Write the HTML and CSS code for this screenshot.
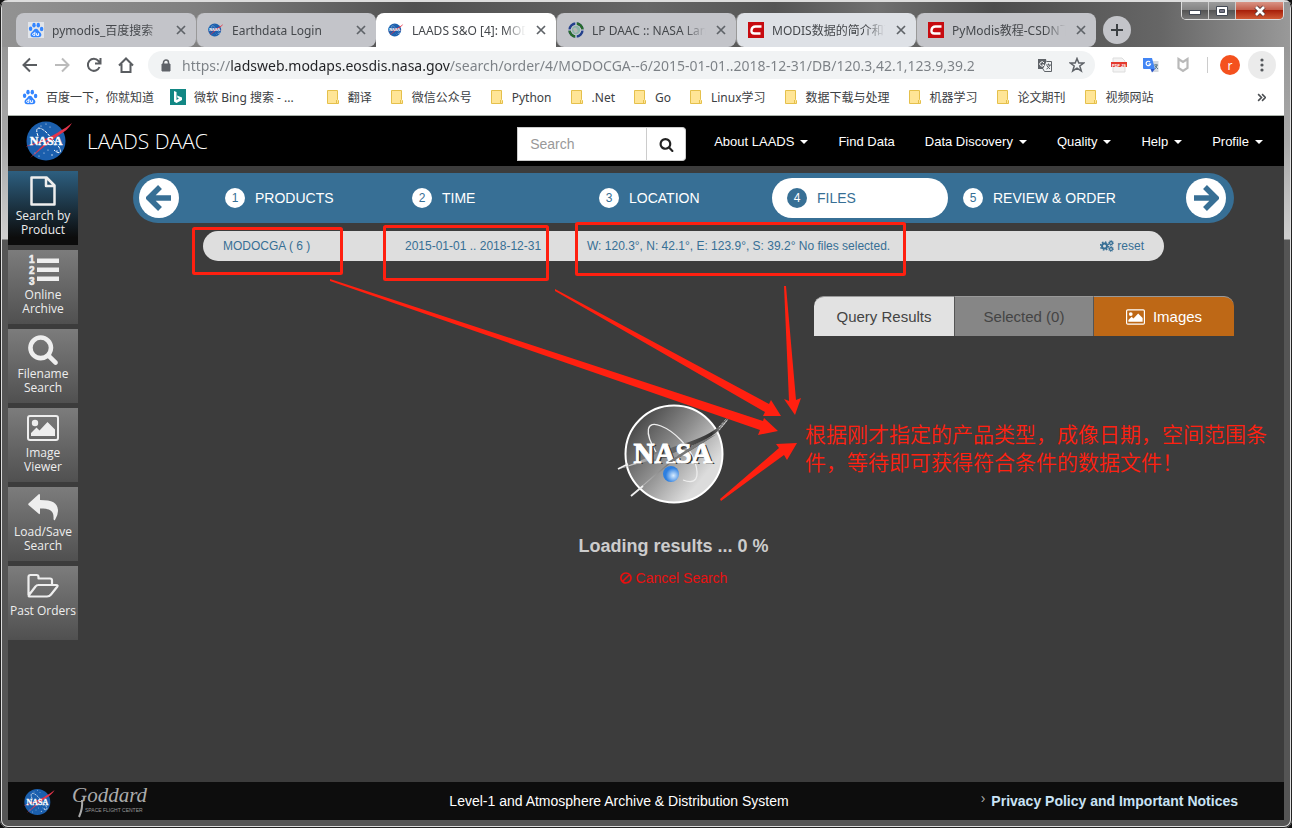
FILE: index.html
```html
<!DOCTYPE html>
<html lang="zh-CN">
<head>
  <meta charset="UTF-8" />
  <meta name="viewport" content="width=device-width, initial-scale=1.0"/>
  <title>LAADS DAAC - Files</title>
  <link rel="stylesheet" href="styles.css">
</head>
<body>
  <!-- shared icons -->
  <svg class="sprite" aria-hidden="true">
    <symbol id="nasa" viewBox="0 0 48 42">
      <circle cx="20" cy="21" r="19.5" fill="#1b5fad"/>
      <g fill="#dfe8f5">
        <circle cx="15" cy="6" r=".6"/><circle cx="20" cy="4" r=".6"/><circle cx="24" cy="7" r=".6"/><circle cx="9" cy="33" r=".6"/><circle cx="13" cy="36" r=".6"/><circle cx="18" cy="33" r=".6"/><circle cx="26" cy="35" r=".8"/><circle cx="31" cy="31" r=".7"/><circle cx="22" cy="30" r=".6"/>
      </g>
      <path d="M12 16C8 6 14 6 21 13L33 27C37 34 32 34 28 30" fill="none" stroke="#fff" stroke-width="1" stroke-dasharray="3 1"/>
      <path d="M46 3C40 14 28 17 14 23L-2 27C14 21 28 16 34 11C38 9 42 6 46 3Z" fill="#e4344a"/>
      <path d="M34 14L4 38C12 30 21 21 29 15Z" fill="#e4344a"/>
      <text x="20" y="25" text-anchor="middle" font-family="Liberation Serif, serif" font-size="12" font-weight="bold" fill="#fff" stroke="#fff" stroke-width=".4">NASA</text>
    </symbol>
    <symbol id="paw" viewBox="0 0 16 16">
      <g fill="#3385ff">
        <ellipse cx="2.6" cy="6.8" rx="1.7" ry="2.3"/><ellipse cx="6" cy="3.2" rx="1.7" ry="2.4"/><ellipse cx="10.3" cy="3.2" rx="1.7" ry="2.4"/><ellipse cx="13.6" cy="7" rx="1.7" ry="2.2"/>
        <path d="M8 6.8C10 6.8 10.5 9 12 10.3C14.5 12.5 13.3 15.2 10.8 15.2H5C2.5 15.2 1.6 12.3 3.8 10.3C5.5 9 6 6.8 8 6.8Z"/>
      </g>
      <path d="M6.9 9.8V13.4H5.7C4.2 13.4 4.2 11.3 5.7 11.3H6.9M8.6 11.2V13.4H10.6V11.2" fill="none" stroke="#fff"/>
    </symbol>
    <symbol id="close" viewBox="0 0 10 10">
      <path d="M1 1L9 9M9 1L1 9" fill="none" stroke="#5f6368" stroke-width="1.7"/>
    </symbol>
    <symbol id="csdn" viewBox="0 0 16 16">
      <path d="M0 0H16V16H0Z" fill="#c70b10"/>
      <path d="M13.5 4.5H7.5Q4 4.5 3.5 8Q3 11.5 6.5 11.5H12.5" fill="none" stroke="#fff" stroke-width="2.4"/>
    </symbol>
    <symbol id="folder" viewBox="0 0 12 14">
      <path d="M.5 .5H10.5V9.5Q12 9.5 11.5 13.5H.5Z" fill="#ffe596" stroke="#e5c04b"/>
      <path d="M9.5 13V10" stroke="#e5c04b"/>
    </symbol>
    <symbol id="search" viewBox="0 0 1792 1792">
      <path fill="currentColor" d="M1216 832q0-185-131.500-316.500T768 384 451.500 515.500 320 832t131.500 316.500T768 1280t316.500-131.500T1216 832zm512 832q0 52-38 90t-90 38q-54 0-90-38l-343-342q-179 124-399 124-143 0-273.500-55.500t-225-150-150-225T64 832t55.500-273.500 150-225 225-150T768 128t273.500 55.500 225 150 150 225T1472 832q0 220-124 399l343 343q37 37 37 90z"/>
    </symbol>
    <symbol id="picture" viewBox="0 0 32 26">
      <rect x="1" y="1" width="30" height="24" rx="2" fill="none" stroke="currentColor" stroke-width="2"/>
      <circle cx="8" cy="8" r="3.2" fill="currentColor"/>
      <path d="M4 21V18L9.500 12.500L12.500 15.500L20.500 7L28 14.500V21Z" fill="currentColor"/>
    </symbol>
    <symbol id="arrow" viewBox="0 0 26 26">
      <path d="M1 13H22M12 2L23 13L12 24" fill="none" stroke="currentColor" stroke-width="5.500"/>
    </symbol>
  </svg>

  <div class="window">
    <header class="tabstrip">
      <div class="tabs">
        <a class="tab" href="#"><svg class="favicon pale"><use href="#paw"/></svg><span class="tab-title">pymodis_百度搜索</span><svg class="close"><use href="#close"/></svg></a>
        <a class="tab" href="#"><svg class="favicon"><use href="#nasa"/></svg><span class="tab-title">Earthdata Login</span><svg class="close"><use href="#close"/></svg></a>
        <a class="tab active" href="#"><svg class="favicon"><use href="#nasa"/></svg><span class="tab-title">LAADS S&amp;O [4]: MODOCGA</span><svg class="close"><use href="#close"/></svg></a>
        <a class="tab" href="#">
          <svg class="favicon" viewBox="0 0 16 16"><circle cx="8" cy="8" r="6.500" fill="none" stroke="#23408c" stroke-width="2.400"/><path d="M8 1.500A6.500 6.500 0 0 1 14.500 8M8 14.500A6.500 6.500 0 0 1 1.500 8" fill="none" stroke="#276b2b" stroke-width="2.400"/><path d="M8 0V3M8 13V16M0 8H3M13 8H16" stroke="#dde" stroke-width="1.200"/><circle cx="8" cy="8" r="4.200" fill="#8db5a9"/><path d="M5 7Q7 4 9 7T7 11" fill="#b8b8b8"/></svg>
          <span class="tab-title">LP DAAC :: NASA Land Data</span><svg class="close"><use href="#close"/></svg>
        </a>
        <a class="tab light" href="#"><svg class="favicon"><use href="#csdn"/></svg><span class="tab-title">MODIS数据的简介和下载</span><svg class="close"><use href="#close"/></svg></a>
        <a class="tab" href="#"><svg class="favicon"><use href="#csdn"/></svg><span class="tab-title">PyModis教程-CSDN下载</span><svg class="close"><use href="#close"/></svg></a>
      </div>
      <button class="new-tab" aria-label="New tab"><svg viewBox="0 0 14 14"><path d="M7 1V13M1 7H13" stroke="#3c4043" stroke-width="2"/></svg></button>
      <div class="window-buttons">
        <button aria-label="Minimize"><svg viewBox="0 0 14 12"><rect x="1.500" y="5.500" width="11" height="4" fill="#fff" stroke="#444a55"/></svg></button>
        <button aria-label="Maximize"><svg viewBox="0 0 14 12"><path d="M1.500 1.500H12.500V10.500H1.500Z" fill="#fff" stroke="#444a55"/><path d="M4.500 4.500H9.500V7.500H4.500Z" fill="#778" stroke="#444a55"/></svg></button>
        <button class="win-close" aria-label="Close"><svg viewBox="0 0 14 12"><path d="M3 2L11 10M11 2L3 10" stroke="#533" stroke-width="4.500"/><path d="M3 2L11 10M11 2L3 10" stroke="#fff" stroke-width="2.700"/></svg></button>
      </div>
    </header>

    <div class="toolbar">
      <button class="tool" aria-label="Back"><svg viewBox="0 0 16 16"><path d="M15 8H2M8 1.500L1.500 8L8 14.500"/></svg></button>
      <button class="tool off" aria-label="Forward"><svg viewBox="0 0 16 16"><path d="M1 8H14M8 1.500L14.500 8L8 14.500"/></svg></button>
      <button class="tool" aria-label="Reload"><svg viewBox="0 0 16 16"><path d="M13.500 10A6 6 0 1 1 12.500 4L14 6M14.500 1V6.500H9"/></svg></button>
      <button class="tool" aria-label="Home"><svg viewBox="0 0 16 16"><path d="M3.500 7V15H12.500V7M1 8.500L8 1.500L15 8.500"/></svg></button>
      <div class="omnibox">
        <svg class="lock" viewBox="0 0 10 13"><path d="M1 5H9V12H1Z" fill="#5f6368" stroke="#5f6368"/><path d="M2.500 5V3.500A2.500 2.500 0 0 1 7.500 3.500V5" fill="none" stroke="#5f6368" stroke-width="1.500"/></svg>
        <input class="url" type="text" aria-label="Address" value="https://ladsweb.modaps.eosdis.nasa.gov/search/order/4/MODOCGA--6/2015-01-01..2018-12-31/DB/120.3,42.1,123.9,39.2">
        <svg class="box-icon" viewBox="0 0 16 16"><path d="M1 2H9L11 12H1Z" fill="#5f6368"/><path d="M9.500 4.500H14.500V14.500H7.500L6 12" fill="#f1f3f4" stroke="#5f6368"/><path d="M7 6A2.200 2.200 0 1 0 7 8H5" fill="none" stroke="#fff"/><path d="M9 8H14M11.500 6.500V8M13 8Q12 11 9.500 12M10 9L13 12" fill="none" stroke="#5f6368"/></svg>
        <svg class="box-icon" viewBox="0 0 16 16"><path d="M8 1.500L9.800 6H14.700L10.800 9L12.300 14L8 11.200L3.700 14L5.200 9L1.300 6H6.200Z" fill="none" stroke="#5f6368" stroke-width="1.500"/></svg>
      </div>
      <div class="extensions">
        <svg viewBox="0 0 16 16"><path d="M2 1H11L14 4V15H2Z" fill="#f3f3f3" stroke="#ddd"/><path d="M0 5H16V10H0Z" fill="#e33a2e"/><text x="8" y="9.500" text-anchor="middle" font-family="Liberation Sans, sans-serif" font-size="4" font-weight="bold" fill="#fff">PDF JS</text></svg>
        <svg viewBox="0 0 16 16"><path d="M6 4H15.500V15H9Z" fill="#d5d9df"/><path d="M0 1H9L12 12H1Q0 12 0 11Z" fill="#4285f4"/><path d="M7.500 12H12L9 15.500Z" fill="#2a56c6"/><path d="M7 5A2.200 2.200 0 1 0 7.500 7H5.500" fill="none" stroke="#fff" stroke-width="1.200"/><path d="M11 8H15M13 7V8M14 8Q13 11 12 12M12 9L15 12" fill="none" stroke="#607d8b"/></svg>
        <svg viewBox="0 0 16 16"><path d="M3.500 2V11L8 14L12.500 11V2L8 5Z" fill="none" stroke="#b9b9b9" stroke-width="2.200"/></svg>
        <span class="divider"></span>
        <button class="avatar">r</button>
        <button class="menu" aria-label="Menu"><svg viewBox="0 0 4 16"><circle cx="2" cy="3" r="1.600"/><circle cx="2" cy="8" r="1.600"/><circle cx="2" cy="13" r="1.600"/></svg></button>
      </div>
    </div>

    <nav class="bookmarks">
      <a href="#"><svg class="site"><use href="#paw"/></svg>百度一下，你就知道</a>
      <a class="bing" href="#"><svg class="site" viewBox="0 0 16 16"><path d="M0 0H16V16H0Z" fill="#128784"/><path d="M4 2L6.500 3V11L9 9.500L7.500 8.800L7 6.500L12 8.500V11L6.500 14L4 12.500Z" fill="#fff"/></svg>微软 Bing 搜索 - ...</a>
      <a href="#"><svg class="folder"><use href="#folder"/></svg>翻译</a>
      <a href="#"><svg class="folder"><use href="#folder"/></svg>微信公众号</a>
      <a href="#"><svg class="folder"><use href="#folder"/></svg>Python</a>
      <a href="#"><svg class="folder"><use href="#folder"/></svg>.Net</a>
      <a href="#"><svg class="folder"><use href="#folder"/></svg>Go</a>
      <a href="#"><svg class="folder"><use href="#folder"/></svg>Linux学习</a>
      <a href="#"><svg class="folder"><use href="#folder"/></svg>数据下载与处理</a>
      <a href="#"><svg class="folder"><use href="#folder"/></svg>机器学习</a>
      <a href="#"><svg class="folder"><use href="#folder"/></svg>论文期刊</a>
      <a href="#"><svg class="folder"><use href="#folder"/></svg>视频网站</a>
      <button class="more" aria-label="More bookmarks"><svg viewBox="0 0 8 8"><path d="M1 1L4 4L1 7M4.500 1L7.500 4L4.500 7" fill="none" stroke="#4a4d51" stroke-width="1.400"/></svg></button>
    </nav>

    <div class="page">
      <header class="site-header">
        <a class="brand" href="#"><svg><use href="#nasa"/></svg>LAADS DAAC</a>
        <form class="search">
          <input type="text" placeholder="Search" aria-label="Search">
          <button type="button" aria-label="Go"><svg><use href="#search"/></svg></button>
        </form>
        <nav class="main-nav">
          <a class="drop" href="#">About LAADS</a>
          <a href="#">Find Data</a>
          <a class="drop" href="#">Data Discovery</a>
          <a class="drop" href="#">Quality</a>
          <a class="drop" href="#">Help</a>
          <a class="drop" href="#">Profile</a>
        </nav>
      </header>

      <div class="content">
        <nav class="sidebar">
          <a class="current" href="#"><svg viewBox="0 0 32 32"><path d="M4.500 2.500H19.500L27.500 10.500V29.500H4.500ZM19 3V11H27" fill="none" stroke="currentColor" stroke-width="2.500" stroke-linejoin="round"/></svg>Search by Product</a>
          <a href="#"><svg viewBox="0 0 32 32"><path d="M10 4.500H32V9H10ZM10 13.500H32V18H10ZM10 22.500H32V27H10Z" fill="currentColor"/><g fill="currentColor" stroke="currentColor" stroke-width=".6" font-family="Liberation Sans, sans-serif" font-size="10" font-weight="bold"><text x="2" y="9">1</text><text x="2" y="20">2</text><text x="2" y="31">3</text></g></svg>Online Archive</a>
          <a href="#"><svg><use href="#search"/></svg>Filename Search</a>
          <a href="#"><svg><use href="#picture"/></svg>Image Viewer</a>
          <a href="#"><svg viewBox="0 0 32 32"><path d="M12 3Q13 3 13 4V9C26 9 31 12 31 20Q31 24 28 29Q27 30 26.500 28C27 20 24 17.500 13 17.500V22Q13 23.500 12 23L1.500 14Q1 13 1.500 12.500Z" fill="currentColor"/></svg>Load/Save Search</a>
          <a href="#"><svg viewBox="0 0 32 32"><path d="M1.500 25V7Q1.500 5 3.500 5H9.500Q11.500 5 11.500 7V8.500H23Q25 8.500 25 10.500V15M3 26.500Q1 26.500 2 25L8.500 16.500Q9.500 15 11.500 15H29Q31.500 15 30 17L24 24.500Q22.500 26.500 20 26.500Z" fill="none" stroke="currentColor" stroke-width="2.200" stroke-linejoin="round"/></svg>Past Orders</a>
        </nav>

        <main>
          <div class="wizard">
            <button class="step-arrow back" aria-label="Previous"><svg><use href="#arrow"/></svg></button>
            <div class="steps">
              <a class="step" href="#"><span class="num">1</span>PRODUCTS</a>
              <a class="step" href="#"><span class="num">2</span>TIME</a>
              <a class="step" href="#"><span class="num">3</span>LOCATION</a>
              <a class="step current" href="#"><span class="num">4</span>FILES</a>
              <a class="step" href="#"><span class="num">5</span>REVIEW &amp; ORDER</a>
            </div>
            <button class="step-arrow" aria-label="Next"><svg><use href="#arrow"/></svg></button>
          </div>

          <div class="summary">
            <span>MODOCGA ( 6 )</span>
            <span>2015-01-01 .. 2018-12-31</span>
            <span>W: 120.3°, N: 42.1°, E: 123.9°, S: 39.2° No files selected.</span>
            <a href="#"><svg viewBox="0 0 14 12"><g fill="none" stroke="currentColor"><circle cx="4.500" cy="6" r="2.500" stroke-width="2"/><circle cx="4.500" cy="6" r="4" stroke-width="1.500" stroke-dasharray="1.600 1.540"/><circle cx="11" cy="3" r="1.500" stroke-width="1.300"/><circle cx="11" cy="9" r="1.500" stroke-width="1.300"/><circle cx="11" cy="3" r="2.500" stroke-width=".8" stroke-dasharray="1 .96"/><circle cx="11" cy="9" r="2.500" stroke-width=".8" stroke-dasharray="1 .96"/></g></svg>reset</a>
          </div>

          <div class="result-tabs">
            <button class="results">Query Results</button>
            <button class="selected">Selected (0)</button>
            <button class="images"><svg><use href="#picture"/></svg>Images</button>
          </div>

          <div class="loading">
            <svg class="loader" viewBox="0 0 116 104">
              <defs>
                <linearGradient id="ball" x1="0" y1="0" x2="1" y2=".8"><stop offset=".1" stop-color="#3f3f3f"/><stop offset=".5" stop-color="#8c8c8c"/><stop offset=".85" stop-color="#dcdcdc"/></linearGradient>
                <linearGradient id="swoosh"><stop offset="0" stop-color="#ddd"/><stop offset=".5" stop-color="#666"/><stop offset=".85" stop-color="#333"/><stop offset="1" stop-color="#bbb"/></linearGradient>
                <radialGradient id="moon" cx=".65" cy=".6" r=".6"><stop offset="0" stop-color="#d8ecff"/><stop offset=".8" stop-color="#2d7fe0"/></radialGradient>
              </defs>
              <circle cx="58" cy="52" r="48.500" fill="url(#ball)" stroke="#fff" stroke-width="2"/>
              <path d="M40 50C28 30 30 18 45 24C58 29 74 45 79 60C84 76 80 83 67 78" fill="none" stroke="#eee" stroke-width="1.300"/>
              <path d="M112 17C102 36 77 43 50 54L3 67C30 57 51 46 73 40C90 34 99 29 112 17Z" fill="url(#swoosh)"/>
              <path d="M101 32L56 60L15 94C35 75 56 57 78 43Z" fill="url(#swoosh)"/>
              <path d="M2 67L12 62M15 94L27 84" fill="none" stroke="#eee" stroke-width="1.800"/>
              <path d="M103 25L112 15M101 31L113 16" fill="none" stroke="#eee" stroke-dasharray="1 1"/>
              <text x="59" y="62" text-anchor="middle" font-family="Liberation Serif, serif" font-size="29" font-weight="bold" fill="#333">NASA</text>
              <text x="57" y="61" text-anchor="middle" font-family="Liberation Serif, serif" font-size="29" font-weight="bold" fill="#fff" stroke="#fff">NASA</text>
              <path d="M101 32L56 60L52 60L78 43Z" fill="#777"/>
              <circle cx="55" cy="72" r="8" fill="url(#moon)"/>
            </svg>
            <h1>Loading results ... 0 %</h1>
            <a class="cancel" href="#"><svg viewBox="0 0 12 12"><path d="M6 1A5 5 0 1 1 5.900 1M2.500 9.500L9.500 2.500" fill="none" stroke="currentColor" stroke-width="1.700"/></svg>Cancel Search</a>
          </div>
        </main>
      </div>

      <footer class="site-footer">
        <div class="logos">
          <svg class="footer-nasa"><use href="#nasa"/></svg>
          <svg class="goddard" viewBox="0 0 80 34"><text x="2" y="18" font-family="Liberation Serif, serif" font-size="21" font-style="italic" fill="#aaa">Goddard</text><text x="15" y="28" font-family="Liberation Sans, sans-serif" font-size="5" fill="#999">SPACE FLIGHT CENTER</text><path d="M12 16Q13 24 9 33" fill="none" stroke="#aaa" stroke-width="2"/></svg>
        </div>
        <span>Level-1 and Atmosphere Archive &amp; Distribution System</span>
        <a class="privacy" href="#">Privacy Policy and Important Notices</a>
      </footer>
    </div>

    <!-- red notes drawn over the page -->
    <svg class="notes" viewBox="0 0 1292 828" aria-hidden="true">
      <g fill="none" stroke="#ff2010" stroke-width="3">
        <rect x="193.500" y="228.500" width="148" height="45" rx="1"/>
        <rect x="384.500" y="226.500" width="163" height="53" rx="1"/>
        <rect x="576.500" y="223.500" width="328" height="51" rx="1"/>
      </g>
      <g fill="#ff2010">
        <path d="M330 279L763 421L764 418L778 431L758 435L760 430L330 281Z"/>
        <path d="M555 289L769 404L771 400L781 416L763 416L765 412L555 291Z"/>
        <path d="M784 286H786L796 400L801 398L795 415L784 399L789 401Z"/>
        <path d="M720 499L779 448L776 444L797 443L787 460L784 455L721 501Z"/>
      </g>
    </svg>
    <p class="note-text">根据刚才指定的产品类型，成像日期，空间范围条件，等待即可获得符合条件的数据文件！</p>
  </div>
</body>
</html>
```
FILE: styles.css
```css
* {
  box-sizing: border-box;
}
body {
  margin: 0;
  background: #111;
  font-family: "Liberation Sans", "Noto Sans CJK SC", sans-serif;
  font-size: 14px;
}
a {
  color: inherit;
  text-decoration: none;
}
button {
  padding: 0;
  border: none;
  background: none;
  font: inherit;
  color: inherit;
  cursor: pointer;
}
svg {
  display: block;
  flex: none;
}
.sprite {
  position: absolute;
  width: 0;
  height: 0;
}

/* browser window */
.window {
  position: relative;
  display: flex;
  flex-direction: column;
  min-height: 100vh;
  padding: 0 8px 8px;
  border-radius: 8px;
  background: linear-gradient(#8f8f8f, #a8a8a8 140px, #cfcfcf 239px, #555 240px);
  box-shadow: inset 0 0 0 1px #222, inset 0 0 0 2px #ddd;
  font-family: "Noto Sans", "Noto Sans CJK SC", sans-serif;
  overflow: hidden;
}
.tabstrip {
  display: flex;
  height: 47px;
  margin: 0 -6px;
  padding: 0 6px 0 14px;
  border-top: 2px solid #ddd;
  background: linear-gradient(90deg, #929292, #808080 15%, #505050 32%, #666 50%, #555 60%, #707070 68%, #4c4c4c 77%, #666 90%, #999);
}
.tabs {
  display: flex;
  align-items: flex-end;
}
.tab {
  display: flex;
  align-items: center;
  width: 180px;
  height: 34px;
  padding: 0 10px 0 12px;
  border-radius: 8px;
  background: #c3c4c9;
  color: #45484c;
  font-size: 12px;
}
.tab.active {
  border-radius: 8px 8px 0 0;
  background: #fff;
}
.tab.light {
  background: #dee1e6;
}
.tab + .tab:not(.active) {
  padding-left: 11px;
  border-left: 1px solid #999;
}
.favicon {
  width: 16px;
  height: 16px;
  margin-right: 8px;
}
.favicon.pale {
  background: #e2e5ea;
}
.tab-title {
  flex: 1;
  overflow: hidden;
  white-space: nowrap;
  mask-image: linear-gradient(90deg, #000 80%, transparent 98%);
}
.close {
  width: 10px;
  height: 10px;
  margin-left: 8px;
}
.new-tab {
  display: grid;
  place-items: center;
  width: 28px;
  height: 28px;
  margin: 14px 0 0 7px;
  border-radius: 50%;
  background: #c3c4c9;
}
.new-tab svg {
  width: 14px;
  height: 14px;
}
.window-buttons {
  display: flex;
  height: 18px;
  margin-left: auto;
  border: 1px solid #ddd;
  border-top: none;
  border-radius: 0 0 5px 5px;
  overflow: hidden;
}
.window-buttons button {
  display: grid;
  place-items: center;
  width: 27px;
  border-right: 1px solid #ccc;
  background: linear-gradient(#9b9b9b, #858585 45%, #555 50%, #777);
}
.window-buttons .win-close {
  width: 47px;
  border: none;
  background: linear-gradient(#d99485, #c35e4b 45%, #a8200a 50%, #cf5a35);
}
.window-buttons svg {
  width: 14px;
  height: 12px;
}

/* address bar */
.toolbar {
  display: flex;
  align-items: center;
  height: 36px;
  padding: 0 8px 0 14px;
  background: #fff;
}
.tool {
  width: 16px;
  height: 16px;
  margin-right: 16px;
}
.tool svg {
  fill: none;
  stroke: #5a5d61;
  stroke-width: 2;
}
.tool.off svg {
  stroke: #bbb;
}
.omnibox {
  flex: 1;
  display: flex;
  align-items: center;
  height: 28px;
  margin-left: -2px;
  padding: 0 10px 0 13px;
  border-radius: 14px;
  background: #f1f3f4;
}
.lock {
  width: 10px;
  height: 13px;
}
.url {
  flex: 1;
  min-width: 0;
  margin-left: 11px;
  padding: 0;
  border: none;
  font-family: "Noto Sans", sans-serif;
  font-size: 14px;
  color: transparent;
  /* host name is darker than the rest of the address */
  background: linear-gradient(90deg, #7b8085 49px, #202124 49px, #202124 268px, #7b8085 268px);
  background-clip: text;
}
.box-icon {
  width: 16px;
  height: 16px;
  margin-left: 16px;
}
.extensions {
  display: flex;
  align-items: center;
  margin-left: 16px;
}
.extensions > svg {
  width: 16px;
  height: 16px;
  margin-right: 16px;
}
.divider {
  width: 1px;
  height: 16px;
  background: #ccc;
}
.avatar {
  width: 20px;
  height: 20px;
  margin: 0 8px 0 12px;
  border-radius: 50%;
  background: #f4511e;
  color: #fff;
  font-size: 12px;
}
.menu {
  display: grid;
  place-items: center;
  width: 28px;
  height: 28px;
  border-radius: 50%;
  background: #ebebeb;
}
.menu svg {
  width: 4px;
  height: 16px;
  fill: #55585c;
}
.bookmarks {
  display: flex;
  align-items: center;
  gap: 19px;
  height: 33px;
  padding: 0 18px 4px 14px;
  border-bottom: 1px solid #aab2aa;
  background: #fff;
  color: #3c4043;
  font-size: 12px;
  white-space: nowrap;
}
.bookmarks a {
  display: flex;
  align-items: center;
}
.bing {
  margin: 0 14px 0 -3px;
}
.site {
  width: 16px;
  height: 16px;
  margin-right: 8px;
}
.folder {
  width: 12px;
  height: 14px;
  margin-right: 9px;
}
.more {
  margin-left: auto;
}
.more svg {
  width: 9px;
  height: 9px;
}

/* page */
.page {
  flex: 1;
  display: flex;
  flex-direction: column;
  background: #3c3c3c;
  color: #fff;
  font-family: "Liberation Sans", sans-serif;
}
.site-header {
  display: flex;
  align-items: center;
  height: 50px;
  padding: 0 21px 0 18px;
  background: #000;
}
.brand {
  display: flex;
  align-items: center;
  gap: 13px;
  font-family: "Open Sans", sans-serif;
  font-size: 21px;
  font-weight: 300;
}
.brand svg {
  width: 48px;
  height: 42px;
}
.search {
  display: flex;
  height: 34px;
  margin: 6px 28px 0 auto;
}
.search input {
  width: 130px;
  padding: 0 12px;
  border: 1px solid #ccc;
  background: #fff;
  font: inherit;
}
.search input::placeholder {
  color: #999;
}
.search button {
  display: grid;
  place-items: center;
  width: 39px;
  border: 1px solid #ccc;
  border-left: none;
  border-radius: 0 4px 4px 0;
  background: #fff;
  color: #222;
}
.search svg {
  width: 15px;
  height: 15px;
}
.main-nav {
  display: flex;
  gap: 30px;
  font-size: 13px;
}
.drop::after {
  content: "";
  display: inline-block;
  margin-left: 6px;
  border: 4px solid transparent;
  border-top-color: #fff;
  border-bottom: none;
  vertical-align: middle;
}
.content {
  flex: 1;
  display: flex;
}
.sidebar {
  display: flex;
  flex-direction: column;
  gap: 5px;
  width: 70px;
  padding-top: 5px;
}
.sidebar a {
  display: flex;
  flex-direction: column;
  align-items: center;
  height: 74px;
  padding-top: 4px;
  background: linear-gradient(#7c7c7c, #505050);
  color: #eee;
  font-family: "Open Sans", sans-serif;
  font-size: 12px;
  line-height: 14px;
  text-align: center;
}
.sidebar a.current {
  background: linear-gradient(#2d5f80, #0c0c0c 90%);
}
.sidebar svg {
  width: 32px;
  height: 32px;
  margin-bottom: 2px;
}
main {
  flex: 1;
  padding: 7px 50px 0 55px;
}
.wizard {
  display: flex;
  align-items: center;
  height: 50px;
  padding: 0 8px 0 6px;
  border-radius: 25px;
  background: #376f95;
}
.step-arrow {
  display: grid;
  place-items: center;
  width: 40px;
  height: 40px;
  border-radius: 50%;
  background: #fff;
  color: #376f95;
}
.step-arrow svg {
  width: 26px;
  height: 26px;
}
.back svg {
  transform: scaleX(-1);
}
.steps {
  flex: 1;
  display: grid;
  grid-template-columns: 187fr 187fr 188fr 176fr 238fr;
  margin-left: 31px;
}
.step {
  display: flex;
  align-items: center;
  gap: 10px;
  height: 40px;
  padding-left: 15px;
  border-radius: 20px;
}
.step.current {
  background: #fff;
  color: #376f95;
}
.num {
  width: 20px;
  border-radius: 50%;
  background: #fff;
  color: #376f95;
  font-size: 12px;
  line-height: 20px;
  text-align: center;
}
.current .num {
  background: #376f95;
  color: #fff;
}
.summary {
  display: grid;
  grid-template-columns: 182px 182px 1fr auto;
  align-items: center;
  height: 30px;
  margin: 8px 70px 0;
  padding: 0 20px;
  border-radius: 15px;
  background: #dedede;
  color: #376f95;
  font-size: 12px;
}
.summary a {
  display: flex;
  align-items: center;
  gap: 3px;
}
.summary svg {
  width: 14px;
  height: 12px;
}
.result-tabs {
  display: flex;
  justify-content: flex-end;
  margin-top: 35px;
}
.result-tabs button {
  width: 140px;
  height: 40px;
  border-top: 1px solid #999;
  font-size: 15px;
}
.result-tabs .results {
  border-radius: 10px 0 0;
  background: #e2e2e2;
  color: #444;
}
.result-tabs .selected {
  border-left: 1px solid #555;
  border-right: 1px solid #555;
  background: #868686;
  color: #444;
}
.result-tabs .images {
  display: flex;
  align-items: center;
  justify-content: center;
  gap: 8px;
  border-radius: 0 10px 0 0;
  background: #be6816;
}
.images svg {
  width: 19px;
  height: 16px;
}
.loading {
  display: flex;
  flex-direction: column;
  align-items: center;
  padding: 66px 20px 0 0;
}
.loader {
  width: 116px;
  height: 104px;
}
h1 {
  margin: 30px 0 12px;
  color: #ccc;
  font-size: 18px;
  line-height: 20px;
}
.cancel {
  display: flex;
  align-items: center;
  gap: 4px;
  color: #e81010;
  line-height: 20px;
}
.cancel svg {
  width: 12px;
  height: 12px;
}
.site-footer {
  display: grid;
  grid-template-columns: 1fr auto 1fr;
  align-items: center;
  height: 38px;
  padding: 0 46px 0 16px;
  background: #0d0d0d;
}
.site-footer > span {
  margin-right: 24px;
}
.logos {
  display: flex;
  gap: 14px;
}
.footer-nasa {
  width: 32px;
  height: 28px;
  margin-top: 4px;
}
.goddard {
  width: 80px;
  height: 34px;
}
.privacy {
  display: flex;
  justify-self: end;
  color: #c9e3f5;
  font-weight: bold;
  line-height: 16px;
  white-space: nowrap;
}
.privacy::before {
  content: "›";
  margin-right: 6px;
  color: #aaa;
  font-weight: normal;
  line-height: 10px;
}

/* notes */
.notes {
  position: absolute;
  top: 0;
  left: 0;
  width: 1292px;
  height: 828px;
  pointer-events: none;
}
.note-text {
  position: absolute;
  top: 419px;
  left: 805px;
  width: 470px;
  margin: 0;
  color: #ff2010;
  font-family: "Noto Sans CJK SC", sans-serif;
  font-size: 21px;
  font-weight: 350;
  line-height: 28px;
}
```
